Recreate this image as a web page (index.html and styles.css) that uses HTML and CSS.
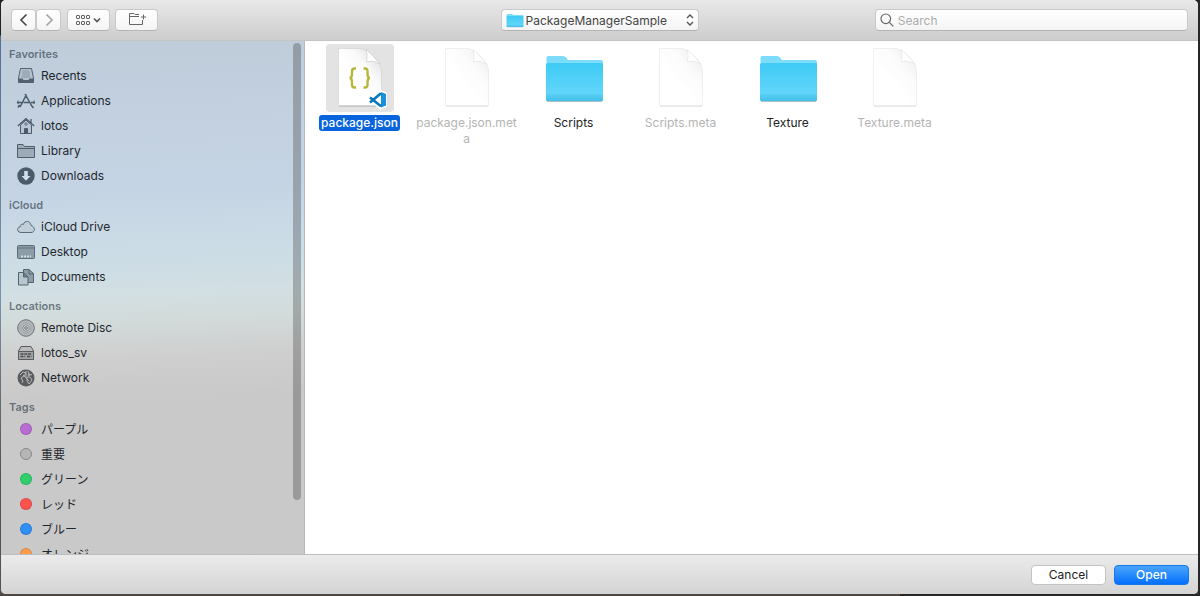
FILE: index.html
```html
<!DOCTYPE html>
<html lang="en">
<head>
<meta charset="utf-8">
<title>Open</title>
<link rel="stylesheet" href="styles.css">
</head>
<body>
<svg class="defs" aria-hidden="true">
  <defs>
    <linearGradient id="folder-front" x1="0" y1="0" x2="0" y2="1">
      <stop offset="0" stop-color="#3ecbf5"/><stop offset=".8" stop-color="#62d5fa"/><stop offset=".84" stop-color="#56cdf3"/><stop offset="1" stop-color="#43bfe8"/>
    </linearGradient>
    <linearGradient id="page-shade" x1="1" y1="0" x2=".45" y2=".6">
      <stop offset=".1" stop-color="#dcdcdc"/><stop offset=".6" stop-color="#fafafa"/><stop offset="1" stop-color="#fff"/>
    </linearGradient>
    <symbol id="folder" viewBox="0 0 68 68">
      <path d="M6.500 57V13.500Q6.500 12 8 12H23Q25 12 26 13.500L28 16H61Q63 16 63 18V57Z" fill="#7edcfb"/>
      <path d="M6 21Q6 19 8 19H61Q63 19 63 21V55.500Q63 57 61.500 57H7.500Q6 57 6 55.500Z" fill="url(#folder-front)"/>
      <path d="M7 57.500H62" stroke="#8aa7b2" stroke-opacity=".7"/>
    </symbol>
    <symbol id="page" viewBox="0 0 68 68">
      <path d="M12.500 4.500H35Q40 5 45 10L50 15Q55.500 21 55.500 26V61.500H12.500Z" fill="url(#page-shade)" stroke="#cfcfcf" stroke-opacity=".6"/>
      <path d="M13 62.300H55" stroke="#aaa" stroke-opacity=".6"/>
      <path d="M40 5.500Q42 11 40.500 17.500Q48 16 54 20L46 11Z" fill="#fff" stroke="#c6c6c6" stroke-width=".6"/>
    </symbol>
  </defs>
</svg>
<main class="dialog">
  <header class="toolbar">
    <div class="tools">
      <div class="history">
        <button class="tool" aria-label="Back"><svg width="24" height="20" viewBox="0 0 24 20"><path d="M14.500 4.500 9 10l5.500 5.500" stroke="#444" stroke-width="1.600"/></svg></button>
        <button class="tool" aria-label="Forward" disabled><svg width="24" height="20" viewBox="0 0 24 20"><path d="M9.500 4.500 15 10l-5.500 5.500" stroke="#a2a2a2" stroke-width="1.600"/></svg></button>
      </div>
      <button class="tool wide" aria-label="View options"><svg width="42" height="20" viewBox="0 0 42 20" stroke="#555"><rect x="8.500" y="5.500" width="3" height="3" rx=".6"/><rect x="13.500" y="5.500" width="3" height="3" rx=".6"/><rect x="18.500" y="5.500" width="3" height="3" rx=".6"/><rect x="8.500" y="11.500" width="3" height="3" rx=".6"/><rect x="13.500" y="11.500" width="3" height="3" rx=".6"/><rect x="18.500" y="11.500" width="3" height="3" rx=".6"/><path d="m26 8.500 3 3 3-3" stroke-width="1.600"/></svg></button>
      <button class="tool wide" aria-label="New folder"><svg width="42" height="20" viewBox="0 0 42 20" stroke="#666"><path d="M23 4.500H19L18 3.500H13.500V14.500H26.500V10M13.500 6.500H23M27.500 4.500V9.500M25 7H30"/></svg></button>
    </div>
    <div class="location">
      <svg class="location-icon" width="18" height="15" viewBox="4 9 61 51"><use href="#folder" width="68" height="68"/></svg>
      <select class="location-select" aria-label="Current folder"><option>PackageManagerSample</option></select>
      <svg class="location-arrows" width="8" height="14" viewBox="0 0 8 14"><path d="M1 5 4 2l3 3M1 9l3 3 3-3" stroke="#555" stroke-width="1.400"/></svg>
    </div>
    <label class="search">
      <svg width="14" height="14" viewBox="0 0 14 14" stroke="#666" stroke-width="1.200"><circle cx="5.800" cy="5.800" r="4.800"/><path d="m9.300 9.300 4 4"/></svg>
      <input class="search-input" type="search" placeholder="Search" aria-label="Search">
    </label>
  </header>

  <div class="content">
    <aside class="sidebar">
      <nav class="sections">
        <section class="section">
          <h2 class="heading">Favorites</h2>
          <a class="row" href="#"><svg class="icon" viewBox="0 0 18 18"><path d="M3.500 1.500H14.500L16.500 11V15.500H1.500V11Z" fill="#b4c1ce" stroke="#52616f"/><path d="M5.500 4H12.500M5 6H13M5 8H13M4.500 10H13.500" stroke="#7c8b99" stroke-width=".8"/><path d="M1.500 11.500H5.500L6.500 13H11.500L12.500 11.500H16.500V16H1.500Z" fill="#52616f"/></svg>Recents</a>
          <a class="row" href="#"><svg class="icon" viewBox="0 0 18 18" stroke="#4b5b69" stroke-width="1.500"><path d="M3 15 9.500 2.500M8 2 14.500 13.500M0 10.500H4.500M6.500 10.500H12M14 10.500H18M14 13l2.500 3M2.500 13 1 15.500"/><path d="M1 8.500V12M17 8.500V12" stroke-width="1"/></svg>Applications</a>
          <a class="row" href="#"><svg class="icon" viewBox="0 0 18 18" stroke="#4b5b69"><path d="M3.500 8V16.500H14.500V8L9 3Z" fill="#b9c6d3"/><path d="M.8 9 9 1.700 17.200 9M14 6V2" stroke-width="1.300"/><circle cx="9" cy="7" r="1.200" stroke-width=".8"/><path d="M7.500 11.500H10.500V16.500H7.500Z" fill="#4b5b69"/></svg>lotos</a>
          <a class="row" href="#"><svg class="icon" viewBox="0 0 18 18" stroke="#4f5f6d"><path d="M.5 15.500V2.500H6L7.500 4.500H17.500V15.500Z" fill="#9dabb9"/><path d="M1 6.500H17"/></svg>Library</a>
          <a class="row" href="#"><svg class="icon" viewBox="0 0 18 18"><circle cx="9" cy="9" r="8.700" fill="#4b5b69"/><path d="M7.200 4H10.800V9H13.500L9 13.800 4.500 9H7.200Z" fill="#d2deea"/></svg>Downloads</a>
        </section>
        <section class="section">
          <h2 class="heading">iCloud</h2>
          <a class="row" href="#"><svg class="icon" viewBox="0 0 18 18"><path d="M4 14.500C-.5 14.500-.3 9 3.200 8.800 3 6.500 5 5.700 6.300 6.500 7.500 2 13.500 2.500 14 7.500 18.500 8.500 18.500 14.500 14 14.500Z" stroke="#5b6b78" fill="#c0ceda"/></svg>iCloud Drive</a>
          <a class="row" href="#"><svg class="icon" viewBox="0 0 18 18"><rect x=".5" y="2.500" width="17" height="13" rx="1" fill="#8d9da8" stroke="#5b6b77"/><path d="M1 5H17" stroke="#60717d"/><path d="M4 13.500H14" stroke="#d1dce3" stroke-width="2" stroke-dasharray="2 1"/></svg>Desktop</a>
          <a class="row" href="#"><svg class="icon" viewBox="0 0 18 18" stroke="#53646e"><path d="M6.500 1.500H12L16.500 5.500V14.500H6.500Z" fill="#8e9ea8"/><path d="M12 1.500V6H16"/><path d="M1.500 4.500H6.500L11 9V17H1.500Z" fill="#b8c6cd"/><path d="M6.500 4.500V9H11Z" fill="#70818b"/></svg>Documents</a>
        </section>
        <section class="section">
          <h2 class="heading">Locations</h2>
          <a class="row" href="#"><svg class="icon" viewBox="0 0 18 18" stroke="#6d7374"><circle cx="9" cy="9" r="8.300" fill="#b1b7b8"/><circle cx="9" cy="9" r="5" fill="#c8cccd" stroke="#8c9293" stroke-width=".7"/><circle cx="9" cy="9" r="3.300" stroke-width=".7"/><circle cx="9" cy="9" r="1.300" fill="#d5d8d8"/></svg>Remote Disc</a>
          <a class="row" href="#"><svg class="icon" viewBox="0 0 18 18" stroke="#595b5c"><path d="M1.500 7 4 2.500H14L16.500 7V15.500H1.500Z" fill="#b9bbbc"/><path d="M1.500 7.500H16.500V15.500H1.500Z" fill="#a2a4a5"/><path d="M3.500 10H14.500M3.500 12.500H8M10 12.500H14.500" stroke="#4c4c4c" stroke-width="1.300" stroke-dasharray="3 .8"/></svg>lotos_sv<svg class="eject" width="10" height="10" viewBox="0 0 10 10" fill="#444"><path d="M5 1 9 6H1ZM1 7.500H9V9H1Z"/></svg></a>
          <a class="row" href="#"><svg class="icon" viewBox="0 0 18 18"><circle cx="9" cy="9" r="8.500" fill="#5b5c5e"/><path d="M3 6 6 3 9 4 7 7 4 9 6 12 5 14M11 2 12 5 15 6M10 8 13 8 15 11 12 15 10 12ZM6 6 12 12M9 2V8" stroke="#b7b8ba" stroke-width="1"/><circle cx="12" cy="6" r="1.300" fill="#a9aaac"/></svg>Network</a>
        </section>
        <section class="section">
          <h2 class="heading">Tags</h2>
          <a class="row" href="#"><span class="tag purple"></span>パープル</a>
          <a class="row" href="#"><span class="tag plain"></span>重要</a>
          <a class="row" href="#"><span class="tag green"></span>グリーン</a>
          <a class="row" href="#"><span class="tag red"></span>レッド</a>
          <a class="row" href="#"><span class="tag blue"></span>ブルー</a>
          <a class="row" href="#"><span class="tag orange"></span>オレンジ</a>
        </section>
      </nav>
      <div class="scroll-thumb"></div>
    </aside>
    <section class="files" aria-label="Files">
      <button class="file selected"><span class="tile"><svg viewBox="0 0 68 68"><use href="#page"/><path d="M30 24.500H28.500Q26 24.500 26 27.500V30Q26 34 23.500 34 26 34 26 38V41Q26 43.500 28.500 43.500H30M37.500 24.500H39Q41.500 24.500 41.500 27.500V30Q41.500 34 44 34 41.500 34 41.500 38V41Q41.500 43.500 39 43.500H37.500" stroke="#b7b73b" stroke-width="2.400"/><path d="M54.500 48 59 50V61.500L54.500 63.500 43 54M43 58 54.500 48" stroke="#fff" stroke-width="4"/><path d="M55 48 60 50V61.500L55 63.500Z" fill="#1a91d8"/><path d="M44 53.500 55 62.300M44 58.500 55 49.300" stroke="#0877bd" stroke-width="2.600"/></svg></span><span class="name">package.json</span></button>
      <button class="file dimmed" disabled><span class="tile"><svg viewBox="0 0 68 68"><use href="#page"/></svg></span><span class="name">package.json.meta</span></button>
      <button class="file"><span class="tile"><svg viewBox="0 0 68 68"><use href="#folder"/></svg></span><span class="name">Scripts</span></button>
      <button class="file dimmed" disabled><span class="tile"><svg viewBox="0 0 68 68"><use href="#page"/></svg></span><span class="name">Scripts.meta</span></button>
      <button class="file"><span class="tile"><svg viewBox="0 0 68 68"><use href="#folder"/></svg></span><span class="name">Texture</span></button>
      <button class="file dimmed" disabled><span class="tile"><svg viewBox="0 0 68 68"><use href="#page"/></svg></span><span class="name">Texture.meta</span></button>
    </section>
  </div>

  <footer class="footer">
    <button class="action">Cancel</button>
    <button class="action primary">Open</button>
  </footer>
</main>
</body>
</html>
```
FILE: styles.css
```css
* { box-sizing: border-box; }

body {
  margin: 0;
  height: 100vh;
  padding: 0 2px 2px 1px;
  background:
    linear-gradient(#272727, #272727) right / 2px 100% no-repeat,
    linear-gradient(90deg, #4e4845 75%, #272727 75%) bottom / 100% 2px no-repeat,
    linear-gradient(#222 0 35px, #55708f 36px, #7a93a8 50%, #57504d 80%);
  font-family: Inter, "Noto Sans CJK JP", sans-serif;
  font-size: 12px;
  color: #222;
}

svg { fill: none; }
button, input, select { font: inherit; color: inherit; }
button { padding: 0; border: 0; background: none; }

.defs { position: absolute; width: 0; height: 0; }

.dialog {
  display: flex;
  flex-direction: column;
  height: 100%;
  overflow: hidden;
  border-radius: 5px;
  background: #fff;
}

.toolbar {
  display: grid;
  grid-template-columns: 1fr 198px 1fr;
  align-items: center;
  flex: none;
  height: 41px;
  padding: 0 10px;
  border-bottom: 1px solid #c4c4c4;
  background: linear-gradient(#e8e8e8, #cdcdcd);
}

.tools { display: flex; gap: 5px; }
.history { display: flex; margin-right: 1px; }

.tool, .location, .search {
  display: flex;
  align-items: center;
  justify-content: center;
  height: 22px;
  border: 1px solid #c9c9c9;
  border-bottom-color: #b4b4b4;
  border-radius: 4px;
  background: linear-gradient(#fff, #f4f4f4);
}
.tool { width: 25px; }
.wide { width: 43px; }
.tool svg { flex: none; }

.location { position: relative; }
.location-icon { position: absolute; left: 4px; pointer-events: none; }
.location-arrows { position: absolute; right: 4px; pointer-events: none; }
.location-select {
  width: 100%;
  height: 20px;
  padding: 0 16px 0 24px;
  border: 0;
  appearance: none;
  background: transparent;
  color: #444;
}

.search {
  justify-self: end;
  width: 64%;
  padding: 0 4px;
  gap: 4px;
}
.search svg { flex: none; }
.search-input {
  flex: 1;
  min-width: 0;
  height: 20px;
  padding: 0;
  border: 0;
  outline: 0;
  background: transparent;
}
.search-input::placeholder { color: #adadad; opacity: 1; }

.content { display: flex; flex: 1; min-height: 0; }

.sidebar {
  position: relative;
  flex: none;
  width: 304px;
  overflow: hidden;
  border-right: 1px solid #b4b9be;
  background: linear-gradient(178deg, #bfccda 0, #c5d4e4 29%, #cbdce6 41%, #d2dfe3 49%, #d3dcdc 53%, #cfcfcf 61%, #c9c9c9 69%);
}
.sections { padding: 5px 26px 0 8px; }
.section { margin-bottom: 9px; }
.heading {
  margin: 0;
  font-size: 11px;
  font-weight: 600;
  line-height: 17px;
  color: #22303c99;
}
.row {
  display: flex;
  align-items: center;
  height: 25px;
  padding-left: 8px;
  gap: 6px;
  color: #1f272e;
  text-decoration: none;
}
.icon { flex: none; width: 18px; height: 18px; }
.eject { margin-left: auto; }
.tag {
  flex: none;
  width: 12px;
  height: 12px;
  margin: 0 3px;
  border: 1px solid #0002;
  border-radius: 50%;
}
.purple { background: #b96cd4; }
.plain { background: #b6b6b6; border-color: #888; }
.green { background: #2fd06c; }
.red { background: #ff5350; }
.blue { background: #2f8ff5; }
.orange { background: #ff9c4a; }

.scroll-thumb {
  position: absolute;
  top: 2px;
  right: 3px;
  width: 8px;
  height: 89%;
  border-radius: 4px;
  background: #0000003b;
}

.files {
  flex: 1;
  display: grid;
  grid-template-columns: repeat(auto-fill, 107px);
  align-content: start;
  padding: 3px 1px;
}
.file {
  display: flex;
  flex-direction: column;
  align-items: center;
  gap: 3px;
  line-height: 16px;
}
.tile { width: 68px; height: 68px; border-radius: 4px; }
.tile svg { display: block; width: 68px; height: 68px; }
.name {
  max-width: 107px;
  padding: 0 2px;
  border-radius: 3px;
  word-break: break-all;
}
.selected .tile { background: #e3e3e3; }
.selected .name { background: #0864dc; color: #fff; font-weight: 500; }
.dimmed { color: #b4b4b4; }
.dimmed svg { opacity: .5; }

.footer {
  display: flex;
  flex: none;
  align-items: center;
  justify-content: flex-end;
  gap: 8px;
  height: 40px;
  padding: 0 9px;
  border-top: 1px solid #bdbdbd;
  background: linear-gradient(#ebebeb, #d4d4d4);
}
.action {
  width: 75px;
  height: 20px;
  border: 1px solid #c3c3c3;
  border-radius: 4px;
  background: #fff;
}
.primary {
  border-color: #1278ec;
  background: linear-gradient(#4aa5fb, #0470fc);
  color: #fff;
  font-weight: 500;
}
```
